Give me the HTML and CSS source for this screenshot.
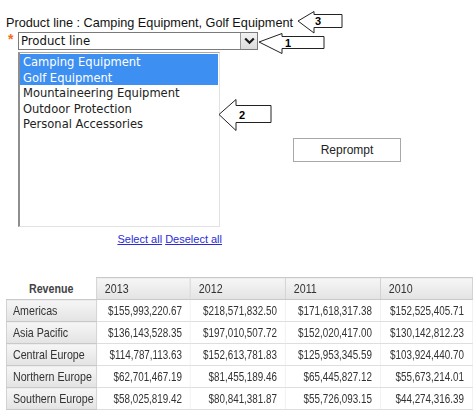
FILE: index.html
```html
<!DOCTYPE html>
<html>
<head>
<meta charset="utf-8">
<link rel="stylesheet" href="styles.css">
</head>
<body>
<div class="page">
  <div class="title">Product line : Camping Equipment, Golf Equipment</div>
  <div class="select-row">
    <span class="req">*</span>
    <div class="select">
      <span class="select-text">Product line</span>
      <span class="select-btn"><svg width="11" height="8" viewBox="0 0 11 8"><path d="M1.2 1.5 L5.5 5.8 L9.8 1.5" fill="none" stroke="#1a1a1a" stroke-width="2.2"/></svg></span>
    </div>
  </div>
  <div class="list-row">
    <div class="list-col">
      <div class="listbox">
        <div class="opt sel">Camping Equipment</div>
        <div class="opt sel">Golf Equipment</div>
        <div class="opt">Mountaineering Equipment</div>
        <div class="opt">Outdoor Protection</div>
        <div class="opt">Personal Accessories</div>
      </div>
      <div class="links"><a href="#">Select all</a> <a href="#">Deselect all</a></div>
    </div>
    <button class="reprompt">Reprompt</button>
  </div>
  <div class="table-wrap">
    <table class="rev">
      <colgroup>
        <col class="c0"><col class="c1"><col class="c2"><col class="c3"><col class="c4">
      </colgroup>
      <tr class="hdr"><th class="corner">Revenue</th><th>2013</th><th>2012</th><th>2011</th><th>2010</th></tr>
      <tr><th>Americas</th><td>$155,993,220.67</td><td>$218,571,832.50</td><td>$171,618,317.38</td><td>$152,525,405.71</td></tr>
      <tr><th>Asia Pacific</th><td>$136,143,528.35</td><td>$197,010,507.72</td><td>$152,020,417.00</td><td>$130,142,812.23</td></tr>
      <tr><th>Central Europe</th><td>$114,787,113.63</td><td>$152,613,781.83</td><td>$125,953,345.59</td><td>$103,924,440.70</td></tr>
      <tr><th>Northern Europe</th><td>$62,701,467.19</td><td>$81,455,189.46</td><td>$65,445,827.12</td><td>$55,673,214.01</td></tr>
      <tr><th>Southern Europe</th><td>$58,025,819.42</td><td>$80,841,381.87</td><td>$55,726,093.15</td><td>$44,274,316.39</td></tr>
    </table>
  </div>

  <svg class="arrow arrow3" width="48" height="24" viewBox="0 0 48 24">
    <polygon points="1,10 17,0.5 17,3.5 45,3.5 45,16.5 17,16.5 17,22 " fill="#fff" stroke="#222" stroke-width="1"/>
    <text x="18" y="14" class="num">3</text>
  </svg>
  <svg class="arrow arrow1" width="68" height="22" viewBox="0 0 68 22">
    <polygon points="1,9 24,0.5 24,3.5 66,3.5 66,15.5 24,15.5 24,20.5" fill="#fff" stroke="#222" stroke-width="1"/>
    <text x="27" y="14" class="num">1</text>
  </svg>
  <svg class="arrow arrow2" width="56" height="33" viewBox="0 0 56 33">
    <polygon points="1,15.5 18,0.5 18,6.5 53,6.5 53,23.5 18,23.5 18,31.5" fill="#fff" stroke="#222" stroke-width="1"/>
    <text x="21" y="19.5" class="num">2</text>
  </svg>
</div>
</body>
</html>
```

FILE: styles.css
```css
html, body {
  margin: 0;
  padding: 0;
  background: #fff;
}

.page {
  position: relative;
  width: 474px;
  height: 411px;
  overflow: hidden;
  padding: 16px 0 0 6px;
  box-sizing: border-box;
}

.title {
  font-family: "Liberation Sans", Arial, sans-serif;
  font-size: 12.7px;
  line-height: 15px;
  color: #111;
  white-space: nowrap;
}

.select-row {
  display: flex;
  align-items: flex-start;
  margin-top: 1px;
}

.req {
  width: 12px;
  color: #f26a1b;
  font-family: "Liberation Sans", Arial, sans-serif;
  font-weight: bold;
  font-size: 14px;
  line-height: 14px;
  padding-left: 2px;
  box-sizing: border-box;
}

.select {
  display: flex;
  align-items: center;
  width: 240px;
  height: 18px;
  box-sizing: border-box;
  border: 1px solid #7b7b7b;
  background: #fff;
}

.select-text {
  flex: 1;
  padding-left: 2px;
  font-family: "DejaVu Sans Condensed", "DejaVu Sans", sans-serif;
  font-size: 13px;
  line-height: 16px;
  color: #111;
}

.select-btn {
  width: 17px;
  height: 16px;
  box-sizing: border-box;
  border-left: 1px solid #9a9a9a;
  background: linear-gradient(#f2f2f2, #dcdcdc);
  display: flex;
  align-items: center;
  justify-content: center;
}

.list-row {
  display: flex;
  align-items: flex-start;
  margin-left: 12px;
  margin-top: 2px;
}

.list-col {
  width: 202px;
  display: flex;
  flex-direction: column;
}

.listbox {
  width: 202px;
  height: 175px;
  box-sizing: border-box;
  border-top: 1px solid #a9a9a9;
  border-left: 2px solid #8e8e8e;
  border-right: 1px solid #e2e2e2;
  border-bottom: 1px solid #e2e2e2;
  padding: 1px 1px 0 0;
  background: #fff;
}

.opt {
  height: 15.5px;
  line-height: 15.5px;
  padding-left: 3px;
  font-family: "DejaVu Sans Condensed", "DejaVu Sans", sans-serif;
  font-size: 12.8px;
  color: #222;
  white-space: nowrap;
}

.opt.sel {
  background: #3d8ff2;
  color: #fff;
}

.links {
  margin-top: 6px;
  margin-right: -2px;
  text-align: right;
  font-family: "Liberation Sans", Arial, sans-serif;
  font-size: 11px;
  line-height: 13px;
}

.links a {
  color: #2b2bd6;
  text-decoration: underline;
}

.reprompt {
  margin-left: 73px;
  margin-top: 86px;
  width: 108px;
  height: 24px;
  background: #fff;
  border: 1px solid #a8a8a8;
  border-radius: 0;
  font-family: "Liberation Sans", Arial, sans-serif;
  font-size: 12px;
  color: #222;
  padding: 0;
}

/* The reference table is horizontally condensed (Arial Narrow look):
   lay it out at full width and squeeze it on the x axis. */
.table-wrap {
  margin-top: 31px;
  width: 568px;
  transform: scaleX(0.8204);
  transform-origin: 0 0;
}

.rev {
  border-collapse: collapse;
  table-layout: fixed;
  width: 568px;
  font-family: "Liberation Sans", Arial, sans-serif;
  color: #333;
}

.rev .c0 { width: 109.7px; }
.rev .c1 { width: 114.6px; }
.rev .c2 { width: 115.8px; }
.rev .c3 { width: 115.8px; }
.rev .c4 { width: 112.1px; }

.rev tr {
  height: 22px;
}

.rev th, .rev td {
  padding: 0;
  height: 22px;
  box-sizing: border-box;
  white-space: nowrap;
  overflow: hidden;
}

.rev th {
  font-weight: normal;
  font-size: 13px;
  text-align: left;
  padding-left: 7.5px;
  background: linear-gradient(#f6f6f6, #e3e3e3);
  border: 1px solid #c9c9c9;
}

.rev .hdr th {
  padding-left: 9.8px;
}

.rev .hdr th.corner {
  background: #fff;
  border: none;
  text-align: center;
  padding-left: 0;
  font-weight: bold;
  color: #444;
}

.rev td {
  font-size: 12px;
  text-align: right;
  padding-right: 9.8px;
  border-top: 1px solid #dedede;
  border-bottom: 1px solid #dedede;
  border-left: 1px solid #efefef;
  border-right: 1px solid #efefef;
}

.arrow {
  position: absolute;
  overflow: visible;
}

.arrow .num {
  font-family: "Liberation Sans", Arial, sans-serif;
  font-weight: bold;
  font-size: 11px;
  fill: #000;
}

.arrow3 { left: 297px; top: 11px; }
.arrow1 { left: 258px; top: 33px; }
.arrow2 { left: 218px; top: 99px; }
```
